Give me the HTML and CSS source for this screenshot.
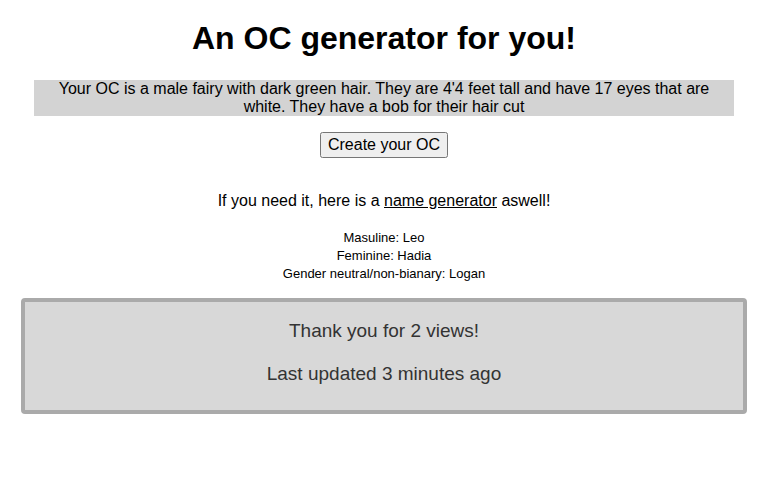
FILE: index.html
```html
<!DOCTYPE html>
<html lang="en">
<head>
    <meta charset="UTF-8">
    <meta name="viewport" content="width=device-width, initial-scale=1.0">
    <title>OC Generator</title>
    <link rel="stylesheet" href="styles.css">
</head>
<body>

    <h1>An OC generator for you!</h1>

    <p class="result" id="result">Your OC is a male fairy with dark green hair. They are 4'4 feet tall and have 17 eyes that are white. They have a bob for their hair cut</p>

    <div class="actions">
        <button onclick="createOC()">Create your OC</button>
    </div>

    <p class="names-intro">If you need it, here is a <a href="#">name generator</a> aswell!</p>

    <div class="names">
        <div>Masuline: Leo</div>
        <div>Feminine: Hadia</div>
        <div>Gender neutral/non-bianary: Logan</div>
    </div>

    <div class="views">
        <p>Thank you for 2 views!</p>
        <p>Last updated 3 minutes ago</p>
    </div>

    <script>
        let genders = ['male', 'female', 'non-binary'];
        let species = ['fairy', 'elf', 'human', 'vampire', 'mermaid'];
        let hair = ['dark green', 'blonde', 'black', 'pink', 'silver'];
        let eyes = ['white', 'blue', 'red', 'brown', 'green'];
        let cuts = ['a bob', 'a buzz cut', 'long braids', 'a pixie cut'];

        function pick(list) {
            return list[Math.floor(Math.random() * list.length)];
        }

        function createOC() {
            let feet = 4 + Math.floor(Math.random() * 3);
            let inches = Math.floor(Math.random() * 12);
            let eyeCount = 1 + Math.floor(Math.random() * 20);
            document.getElementById('result').textContent =
                `Your OC is a ${pick(genders)} ${pick(species)} with ${pick(hair)} hair. ` +
                `They are ${feet}'${inches} feet tall and have ${eyeCount} eyes that are ${pick(eyes)}. ` +
                `They have ${pick(cuts)} for their hair cut`;
        }
    </script>

</body>
</html>
```

FILE: styles.css
```css
body {
    margin: 0;
    font-family: "Liberation Sans", Arial, sans-serif;
    text-align: center;
    color: #000;
}
h1 {
    font-size: 32px;
    margin: 20px 0 23px;
}
.result {
    width: 652px;
    margin: 0 auto;
    padding: 0 24px;
    background: lightgray;
    font-size: 16px;
    line-height: 18px;
}
.actions {
    margin-top: 16px;
}
button {
    font-family: "Liberation Sans", Arial, sans-serif;
    font-size: 16px;
    padding: 2px 6px;
}
.names-intro {
    margin: 34px 0 19px;
    font-size: 16px;
}
.names-intro a {
    color: #000;
}
.names {
    font-size: 13px;
    line-height: 18px;
}
.views {
    margin: 15px 21px 0;
    background: #d8d8d8;
    border: 4px solid #aaa;
    border-radius: 4px;
    color: #333;
    font-size: 19px;
    padding: 18px 0 25px;
}
.views p {
    margin: 0;
    line-height: 22px;
}
.views p + p {
    margin-top: 21px;
}
```
